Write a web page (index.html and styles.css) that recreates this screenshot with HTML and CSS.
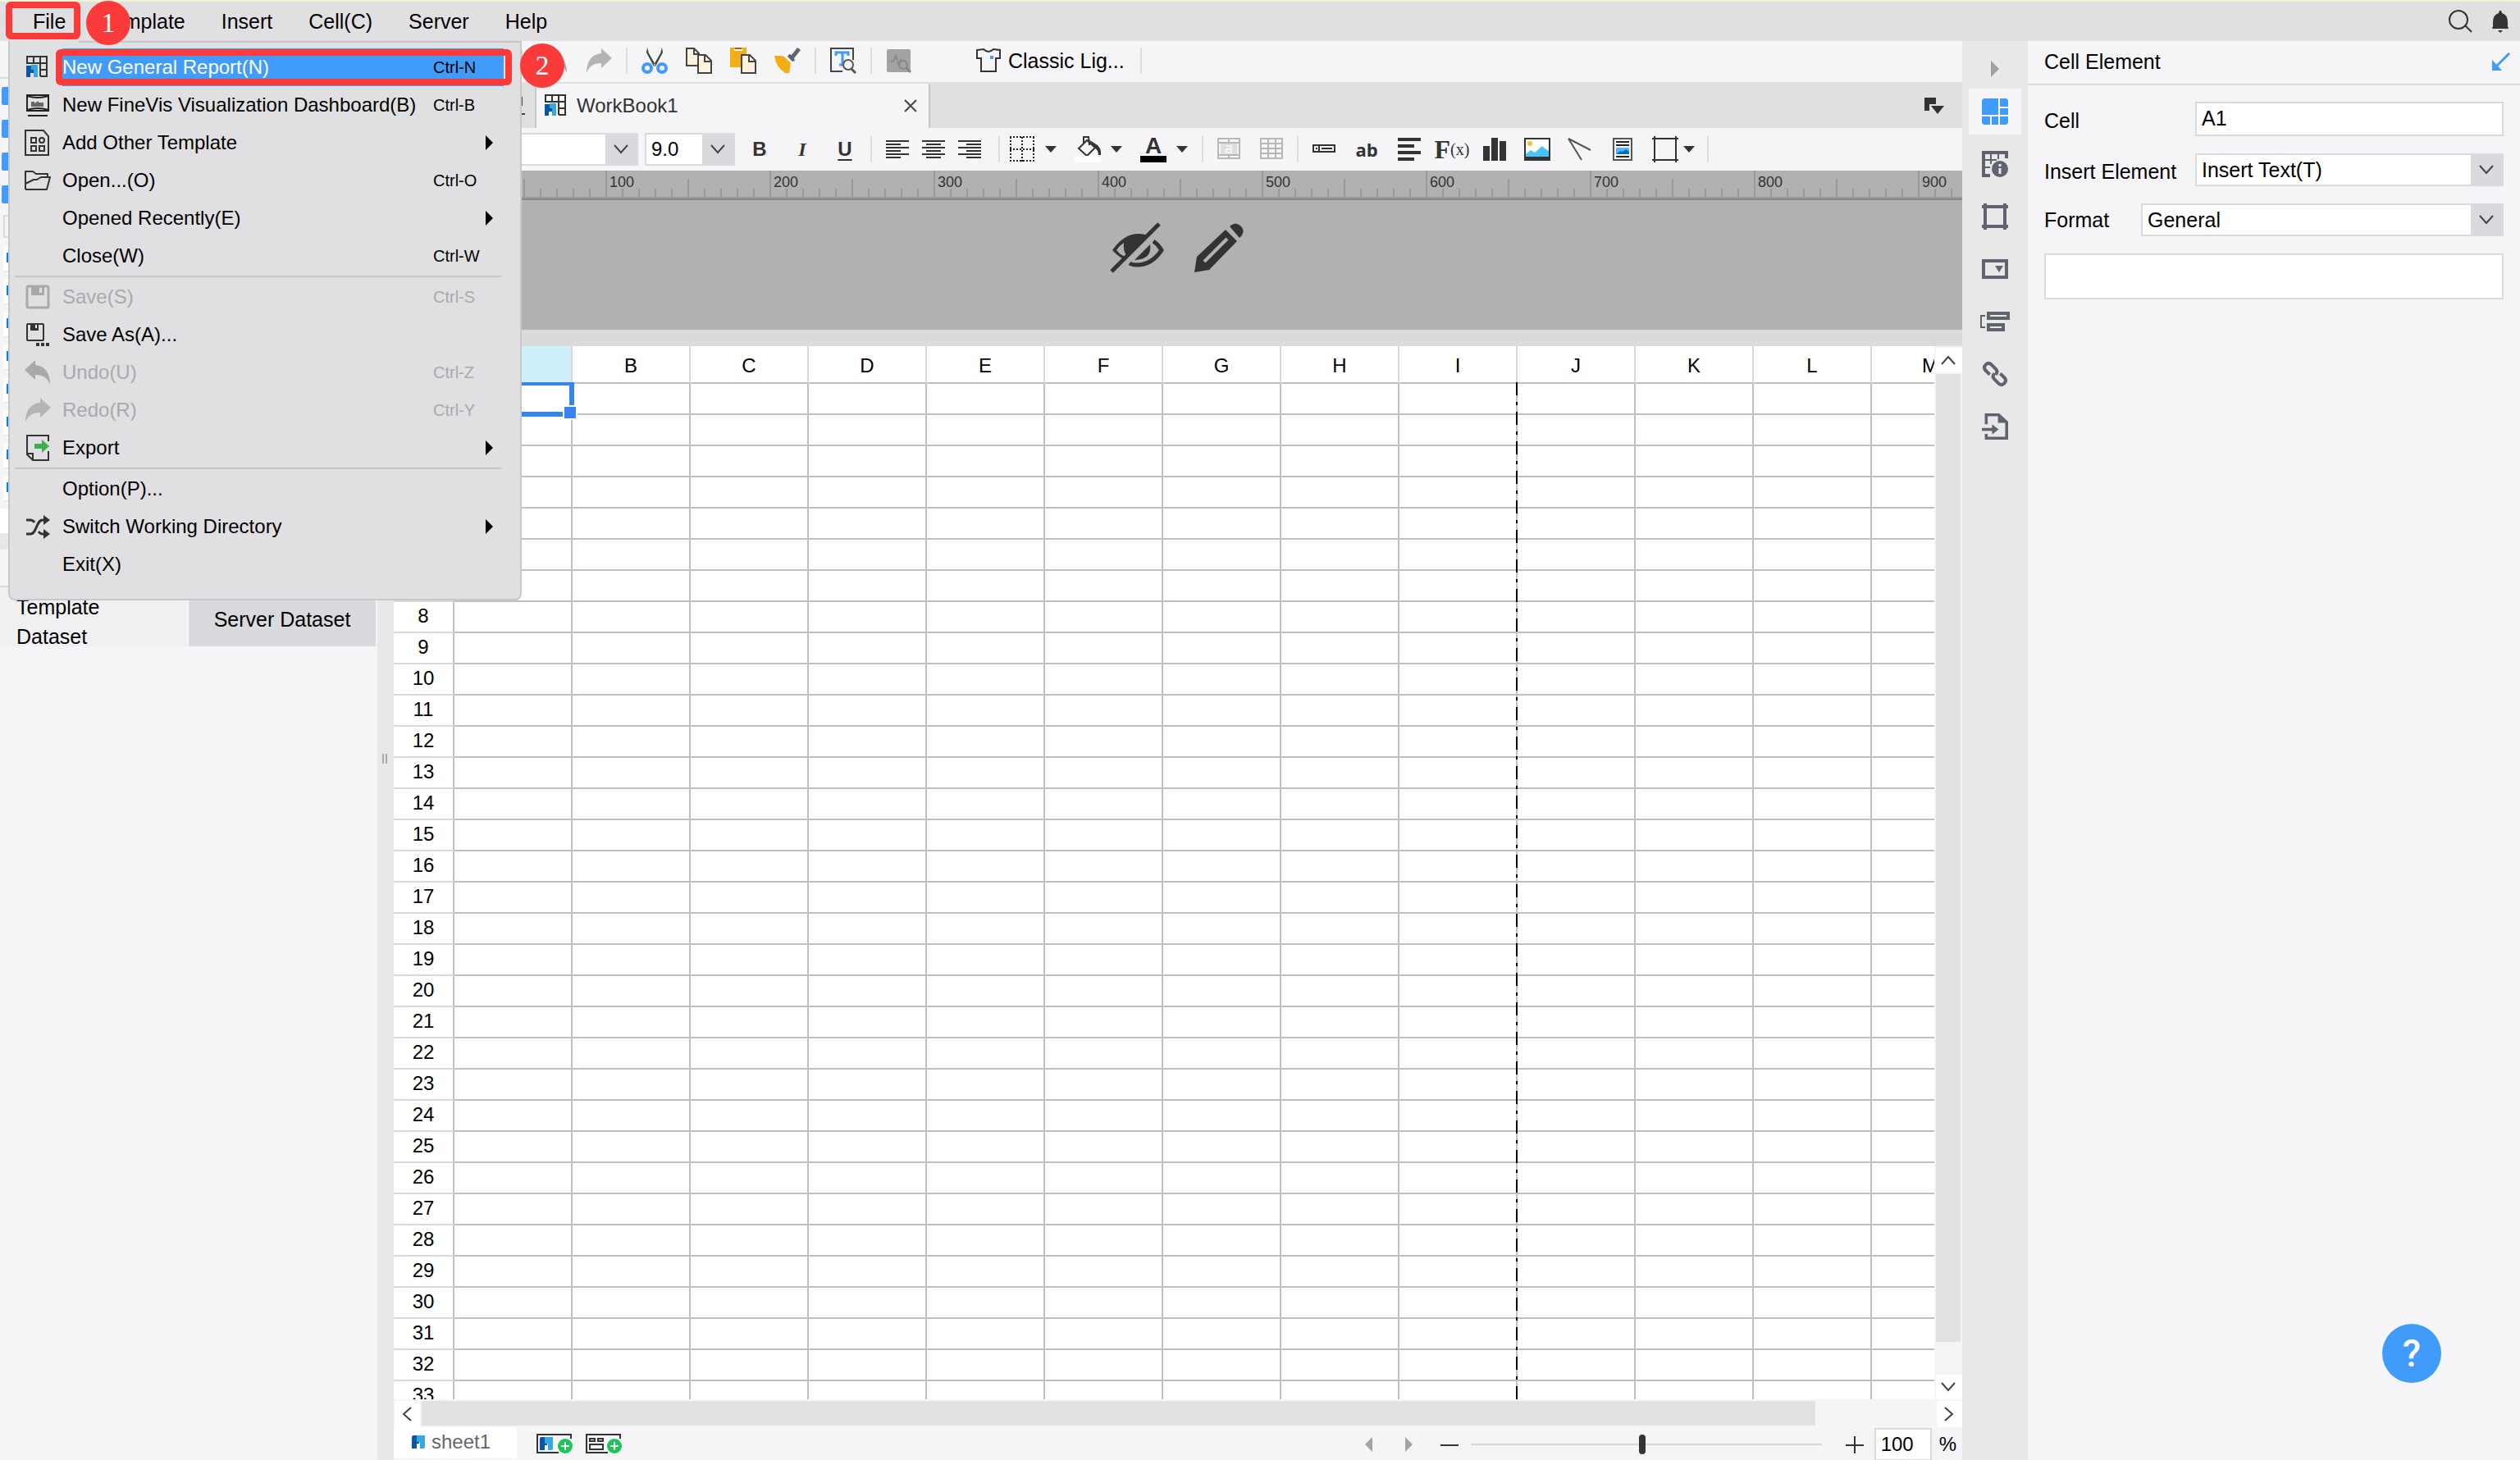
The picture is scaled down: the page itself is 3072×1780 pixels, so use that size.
FILE: index.html
```html
<!DOCTYPE html>
<html lang="en">
<head>
<meta charset="utf-8">
<title>WorkBook1</title>
<link rel="stylesheet" href="styles.css">
</head>
<body>
<svg class="defs" aria-hidden="true">
  <symbol id="i-report" viewBox="0 0 32 32">
    <path d="M3 12V3h24v24h-8M3 11h24M11 3v8M19 3v24M19 19h8" fill="none" stroke="#333" stroke-width="2"/>
    <path d="M2 14h6v5h3v4H7v5H2z" fill="#0a56a3"/><path d="M8 13h8v15h-5v-9H8z" fill="#35a8e0"/>
  </symbol>
  <symbol id="i-dash" viewBox="0 0 32 32">
    <path d="M3 4h26v19H3zM3 5q13 4 26 0M3 22q13-4 26 0M4 29h24" fill="none" stroke="#222" stroke-width="2"/>
    <path d="M8 18v-6h4v2l5-3v2h6v5z" fill="#666"/>
  </symbol>
  <symbol id="i-addt" viewBox="0 0 32 32">
    <path d="M1 1h22l6 7v23H1zM8 10h6v6H8zM8 20h6v6H8zM18 20h6v6h-6z" fill="none" stroke="#333" stroke-width="2"/>
    <circle cx="21" cy="13" r="3" fill="none" stroke="#333" stroke-width="2"/>
  </symbol>
  <symbol id="i-open" viewBox="0 0 32 32">
    <path d="M1 27V5h9l4 3h14v4M1 20l10-5h4l5-3h11l-4 15H1" fill="none" stroke="#333" stroke-width="2" stroke-linejoin="round"/>
  </symbol>
  <symbol id="i-save" viewBox="0 0 32 32">
    <rect x="3" y="3" width="26" height="26" rx="2" fill="none" stroke="#a9a9ab" stroke-width="3"/>
    <path d="M8 3h16v11H8z" fill="#a9a9ab"/><path d="M18 5h3v6h-3z" fill="#e0e0e2"/>
  </symbol>
  <symbol id="i-saveas" viewBox="0 0 32 32">
    <rect x="3" y="3" width="20" height="20" rx="1" fill="none" stroke="#333" stroke-width="2"/>
    <path d="M7 3h10v8H7z" fill="#333"/><path d="M13 4h2v4h-2z" fill="#eee"/>
    <path d="M14 26h4v4h-4zM20 26h4v4h-4zM26 26h4v4h-4z" fill="#333"/>
  </symbol>
  <symbol id="i-undo" viewBox="0 0 32 32"><path d="M0 13L13 1v6c12 1 18 10 18 24-3-8-8-12-18-12v6z" fill="#a9a9ab"/></symbol>
  <symbol id="i-redo" viewBox="0 0 32 32"><path d="M32 13L19 1v6C7 8 1 17 1 31c3-8 8-12 18-12v6z" fill="#b4b4b6"/></symbol>
  <symbol id="i-export" viewBox="0 0 32 32">
    <path d="M29 8V1H3v23l7 7h19V20M3 23h7v8" fill="none" stroke="#333" stroke-width="2"/>
    <path d="M12 11h9V6l9 8-9 8v-5h-9z" fill="#3fae4f"/>
  </symbol>
  <symbol id="i-switch" viewBox="0 0 32 32">
    <path d="M2 8h5q3 0 5 3M2 25h5c8 0 7-17 15-17h3M17 22q2 3 5 3h3" fill="none" stroke="#333" stroke-width="3"/>
    <path d="M23 2l8 6-8 6zM23 19l8 6-8 6z" fill="#333"/>
  </symbol>
  <symbol id="i-cut" viewBox="0 0 32 32">
    <path d="M7 0l2 7 8 14-2 2L6 6zM25 0l-2 7-8 14 2 2 9-17z" fill="#444"/>
    <circle cx="7" cy="25" r="5" fill="none" stroke="#419bf9" stroke-width="4"/><circle cx="25" cy="25" r="5" fill="none" stroke="#419bf9" stroke-width="4"/>
  </symbol>
  <symbol id="i-copy" viewBox="0 0 32 32">
    <path d="M1 1h9l6 6v15H1z" fill="#fff3dc" stroke="#444" stroke-width="2"/><path d="M10 1v7h6" fill="none" stroke="#444" stroke-width="2"/>
    <path d="M15 9h9l7 7v15H15z" fill="#fff3dc" stroke="#444" stroke-width="2"/><path d="M23 9v8h8" fill="none" stroke="#444" stroke-width="2"/>
  </symbol>
  <symbol id="i-paste" viewBox="0 0 32 32">
    <path d="M0 0h20v24H0z" fill="#f2ad17"/><path d="M6 0h8v3H6z" fill="#b7561c"/><path d="M5 3h10" stroke="#fff" stroke-width="2"/>
    <path d="M14 9h10l7 7v15H14z" fill="#fff3dc" stroke="#444" stroke-width="2"/><path d="M23 9v8h8" fill="none" stroke="#444" stroke-width="2"/>
  </symbol>
  <symbol id="i-brush" viewBox="0 0 32 32">
    <path d="M0 10h8l4 1 8 8-2 12h-5Q2 24 0 10z" fill="#f2ad17"/><path d="M28 0l4 3-8 10 1 3-3 1-6-6 2-3 3 1z" fill="#5f636e"/>
  </symbol>
  <symbol id="i-tsearch" viewBox="0 0 32 32">
    <path d="M15 29H1V1h27v14" fill="none" stroke="#444" stroke-width="2"/>
    <path d="M7 10V6h15v4M15 6v15M11 21h6" fill="none" stroke="#419bf9" stroke-width="3"/>
    <circle cx="22" cy="21" r="6" fill="#f5f5f7" stroke="#555" stroke-width="2"/><path d="M26 26l5 5" stroke="#555" stroke-width="3"/>
  </symbol>
  <symbol id="i-psearch" viewBox="0 0 32 32">
    <rect x="1" y="2" width="29" height="28" rx="2" fill="#a3a3a5"/>
    <path d="M5 17h4l3-7 3 10 4-6" fill="none" stroke="#8b8b8d" stroke-width="2"/>
    <circle cx="21" cy="21" r="5" fill="none" stroke="#858587" stroke-width="2"/><path d="M25 25l5 5" stroke="#858587" stroke-width="3"/>
  </symbol>
  <symbol id="i-shirt" viewBox="0 0 32 32">
    <path d="M2 3l8-1q6 6 12 0l8 1v10h-5v16H7V13H2z" fill="none" stroke="#333" stroke-width="2"/><path d="M18 10h4v4h-4z" fill="#419bf9"/>
  </symbol>
  <symbol id="i-left" viewBox="0 0 32 32"><path d="M2 6h28M2 10h18M2 14h28M2 18h18M2 22h28M2 26h18" stroke="#333" stroke-width="2"/></symbol>
  <symbol id="i-center" viewBox="0 0 32 32"><path d="M2 6h28M7 10h18M2 14h28M7 18h18M2 22h28M7 26h18" stroke="#333" stroke-width="2"/></symbol>
  <symbol id="i-right" viewBox="0 0 32 32"><path d="M2 6h28M12 10h18M2 14h28M12 18h18M2 22h28M12 26h18" stroke="#333" stroke-width="2"/></symbol>
  <symbol id="i-border" viewBox="0 0 32 32"><path d="M1 1h30M1 30h30M2 1v30M30 1v30M16 1v30M1 16h30" fill="none" stroke="#222" stroke-width="2" stroke-dasharray="2 2"/></symbol>
  <symbol id="i-fill" viewBox="0 0 32 32">
    <path d="M11 9V1h6l1 10M15 5L5 15l10 9 10-10z" fill="none" stroke="#333" stroke-width="2"/><path d="M17 4l11 7q5 5 4 12h-3q0-6-5-9z" fill="#333"/>
    <path d="M0 24h32v8H0z" fill="#fff"/>
  </symbol>
  <symbol id="i-merge" viewBox="0 0 32 32">
    <path d="M3 3h26v24H3zM3 8h26M16 3v5M3 23h26M16 23v4" fill="none" stroke="#b8b8ba" stroke-width="2"/>
    <path d="M6 9h20v13H6z" fill="#dedee0"/><path d="M13 12h6v8h-6v-4h5" fill="none" stroke="#f5f5f7" stroke-width="2"/>
  </symbol>
  <symbol id="i-grid" viewBox="0 0 32 32"><path d="M3 3h26v24H3zM3 9h26M3 15h26M3 21h26M12 3v24M21 3v24" fill="none" stroke="#b8b8ba" stroke-width="2"/></symbol>
  <symbol id="i-field" viewBox="0 0 32 32"><path d="M3 11h26v8H3zM10 11v8M13 15h13M6 15h2" fill="none" stroke="#333" stroke-width="2"/></symbol>
  <symbol id="i-lines" viewBox="0 0 32 32"><path d="M2 4h28M2 12h20M2 20h28M2 28h20" stroke="#333" stroke-width="4"/></symbol>
  <symbol id="i-chart" viewBox="0 0 32 32"><path d="M2 12h8v18H2zM12 2h8v28h-8zM22 6h8v24h-8z" fill="#333"/></symbol>
  <symbol id="i-image" viewBox="0 0 32 32">
    <path d="M1 3h30v26H1z" fill="#fff" stroke="#333" stroke-width="2"/><circle cx="7" cy="9" r="3" fill="#fcb940"/>
    <path d="M2 25v-3l6-5 5 3 9-8 3 3 5 3v7z" fill="#44c4fb"/><path d="M0 25h32v5H0z" fill="#333"/>
  </symbol>
  <symbol id="i-slash" viewBox="0 0 32 32"><path d="M2 3l27 14M2 3l16 26" stroke="#555" stroke-width="2"/></symbol>
  <symbol id="i-doc" viewBox="0 0 32 32">
    <path d="M5 3h22v26H5z" fill="#fff" stroke="#555" stroke-width="2"/><path d="M8 7h16M8 11h16M8 25h16" stroke="#222" stroke-width="2"/>
    <path d="M8 14h16v8H8z" fill="#5db4fb"/><path d="M8 22l5-4 3 1 4-3 4 3v3z" fill="#066fc4"/>
  </symbol>
  <symbol id="i-frame" viewBox="0 0 32 32"><path d="M0 3h32M0 29h32M3 0v32M29 0v32" stroke="#333" stroke-width="2"/></symbol>
  <symbol id="i-caret" viewBox="0 0 14 8"><path d="M0 0h14L7 8z" fill="#333"/></symbol>
  <symbol id="i-chev" viewBox="0 0 18 12"><path d="M1 1l8 9 8-9" fill="none" stroke="#444" stroke-width="2"/></symbol>
  <symbol id="i-tri" viewBox="0 0 10 18"><path d="M0 0l9 9-9 9z"/></symbol>
  <symbol id="i-sheet" viewBox="0 0 16 16"><path d="M0 2q0-2 2-2h4v8h3v2H6v6H0z" fill="#0a56a3"/><path d="M6 0h10v14q0 2-2 2h-4V8H6z" fill="#35a8e0"/></symbol>
</svg>

<div class="app">
  <header class="menubar">
    <nav class="menus">
      <button class="menu-btn">File</button><button class="menu-btn">Template</button><button class="menu-btn">Insert</button><button class="menu-btn">Cell(C)</button><button class="menu-btn">Server</button><button class="menu-btn">Help</button>
    </nav>
    <div class="menu-tools">
      <button class="bare" aria-label="Search"><svg width="30" height="28" viewBox="0 0 30 28"><circle cx="12" cy="12" r="11" fill="none" stroke="#333" stroke-width="2"/><path d="M20 19l8 8" stroke="#333" stroke-width="2"/></svg></button>
      <button class="bare" aria-label="Notifications"><svg width="22" height="28" viewBox="0 0 22 28"><path d="M10 1h2l1 3q7 2 7 11v5l1 3H1l1-3v-5Q2 6 9 4zM8 25h6l-3 3z" fill="#333"/></svg></button>
    </div>
  </header>

  <div class="workspace">
    <aside class="side">
      <div class="side-head"></div>
      <div class="side-tools"><i></i><i></i><i></i><i></i></div>
      <div class="side-filter"></div>
      <ul class="side-list"><li></li><li></li><li></li><li></li><li></li><li></li><li></li><li></li></ul>
      <div class="side-foot"></div>
      <div class="side-split"></div>
      <div class="side-sub"></div>
      <div class="side-tabs">
        <button class="side-tab">Template Dataset</button>
        <button class="side-tab side-tab-off">Server Dataset</button>
      </div>
    </aside>
    <div class="splitter"><span></span></div>

    <main class="editor">
      <div class="toolbar">
        <button class="tool" aria-label="New"><svg><use href="#i-report"/></svg></button>
        <button class="tool" aria-label="Open"><svg><use href="#i-open"/></svg></button>
        <button class="tool" aria-label="Save"><svg><use href="#i-save"/></svg></button>
        <button class="tool" aria-label="Undo"><svg><use href="#i-undo"/></svg></button>
        <button class="tool" aria-label="Redo"><svg><use href="#i-redo"/></svg></button>
        <span class="sep"></span>
        <button class="tool" aria-label="Cut"><svg><use href="#i-cut"/></svg></button>
        <button class="tool" aria-label="Copy"><svg><use href="#i-copy"/></svg></button>
        <button class="tool" aria-label="Paste"><svg><use href="#i-paste"/></svg></button>
        <button class="tool" aria-label="Format painter"><svg><use href="#i-brush"/></svg></button>
        <span class="sep"></span>
        <button class="tool" aria-label="Find text"><svg><use href="#i-tsearch"/></svg></button>
        <span class="sep"></span>
        <button class="tool" aria-label="Inspect"><svg><use href="#i-psearch"/></svg></button>
        <button class="theme"><svg><use href="#i-shirt"/></svg>Classic Lig...</button>
        <span class="sep"></span>
      </div>

      <div class="tabs">
        <div class="tab-prev"><svg class="close" viewBox="0 0 16 22"><path d="M1 1h11v10M1 21h15" fill="none" stroke="#444" stroke-width="2"/></svg></div>
        <div class="tab">
          <svg><use href="#i-report"/></svg><span>WorkBook1</span>
          <button class="bare" aria-label="Close tab"><svg class="close" viewBox="0 0 16 16"><path d="M1 1l14 14M15 1L1 15" stroke="#444" stroke-width="2"/></svg></button>
        </div>
        <button class="bare tab-more" aria-label="All tabs"><svg width="24" height="20" viewBox="0 0 24 20"><path d="M0 0h14v8H6v8H0z" fill="#333"/><path d="M8 10h16l-8 10z" fill="#333"/></svg></button>
      </div>

      <div class="format">
        <div class="combo combo-font"><select aria-label="Font"><option></option></select><span class="combo-btn"><svg><use href="#i-chev"/></svg></span></div>
        <div class="combo combo-size"><select aria-label="Font size"><option>9.0</option></select><span class="combo-btn"><svg><use href="#i-chev"/></svg></span></div>
        <button class="fmt"><b>B</b></button>
        <button class="fmt fmt-i"><i>I</i></button>
        <button class="fmt"><u>U</u></button>
        <span class="sep"></span>
        <div class="aligns">
          <button class="fmt" aria-label="Align left"><svg><use href="#i-left"/></svg></button>
          <button class="fmt" aria-label="Align center"><svg><use href="#i-center"/></svg></button>
          <button class="fmt" aria-label="Align right"><svg><use href="#i-right"/></svg></button>
        </div>
        <span class="sep"></span>
        <div class="splits">
          <div class="split"><button class="fmt" aria-label="Borders"><svg><use href="#i-border"/></svg></button><button class="drop" aria-label="Border options"><svg><use href="#i-caret"/></svg></button></div>
          <div class="split"><button class="fmt" aria-label="Fill"><svg><use href="#i-fill"/></svg></button><button class="drop" aria-label="Fill options"><svg><use href="#i-caret"/></svg></button></div>
          <div class="split"><button class="fmt fmt-color">A</button><button class="drop" aria-label="Color options"><svg><use href="#i-caret"/></svg></button></div>
        </div>
        <span class="sep"></span>
        <button class="fmt" aria-label="Merge"><svg><use href="#i-merge"/></svg></button>
        <button class="fmt" aria-label="Unmerge"><svg><use href="#i-grid"/></svg></button>
        <span class="sep"></span>
        <button class="fmt" aria-label="Data column"><svg><use href="#i-field"/></svg></button>
        <button class="fmt fmt-ab">ab</button>
        <button class="fmt" aria-label="Rich text"><svg><use href="#i-lines"/></svg></button>
        <button class="fmt fmt-fx">F<small>(x)</small></button>
        <button class="fmt" aria-label="Chart"><svg><use href="#i-chart"/></svg></button>
        <button class="fmt" aria-label="Image"><svg><use href="#i-image"/></svg></button>
        <button class="fmt" aria-label="Slope line"><svg><use href="#i-slash"/></svg></button>
        <button class="fmt" aria-label="Sub report"><svg><use href="#i-doc"/></svg></button>
        <div class="split split-last"><button class="fmt" aria-label="Float element"><svg><use href="#i-frame"/></svg></button><button class="drop" aria-label="Float options"><svg><use href="#i-caret"/></svg></button></div>
        <span class="sep"></span>
      </div>

      <div class="ruler"><div class="marks"><span>0</span><span>100</span><span>200</span><span>300</span><span>400</span><span>500</span><span>600</span><span>700</span><span>800</span><span>900</span></div></div>

      <div class="pane">
        <button class="bare" aria-label="Hide parameter pane"><svg width="64" height="60" viewBox="0 0 64 60">
          <path d="M2 33q14-20 32-20 6 0 11 2L16 44Q8 40 2 33z" fill="#333"/>
          <path d="M7 33q4-6 9-9-1 10 3 15l-2 2q-6-3-10-8z" fill="#b1b1b1"/>
          <path d="M52 22q6 4 10 11-12 18-30 18-6 0-9-2" fill="none" stroke="#333" stroke-width="5"/>
          <path d="M48 26q3 18-19 19z" fill="#333"/><path d="M1 59L59 1" stroke="#333" stroke-width="5"/>
        </svg></button>
        <button class="bare" aria-label="Edit parameter pane"><svg width="60" height="60" viewBox="0 0 60 60">
          <path d="M0 60l3-19L38 8l14 14-34 35zM43 4q7-7 14 0 6 7-2 14z" fill="#333"/><path d="M12 47L40 19" stroke="#b1b1b1" stroke-width="4"/>
        </svg></button>
      </div>
      <div class="pane-edge"></div>

      <div class="sheet">
        <div class="viewport">
          <table class="cells"><thead><tr><th class="corner"></th></tr></thead><tbody></tbody></table>
          <div class="page-break"></div>
        </div>
        <div class="vscroll">
          <button class="bare" aria-label="Scroll up"><svg class="up"><use href="#i-chev"/></svg></button>
          <div class="vtrack"><div class="vthumb"></div></div>
          <button class="bare" aria-label="Scroll down"><svg><use href="#i-chev"/></svg></button>
        </div>
      </div>
      <div class="hscroll">
        <button class="bare" aria-label="Scroll left"><svg class="lt"><use href="#i-chev"/></svg></button>
        <div class="htrack"><div class="hthumb"></div></div>
        <button class="bare" aria-label="Scroll right"><svg class="rt"><use href="#i-chev"/></svg></button>
      </div>

      <footer class="status">
        <button class="sheet-tab"><svg><use href="#i-sheet"/></svg>sheet1</button>
        <button class="bare add" aria-label="Add sheet"><svg width="44" height="24" viewBox="0 0 44 24"><path d="M42 6V1H1v22h26" fill="none" stroke="#333" stroke-width="2"/><use href="#i-sheet" x="4" y="4" width="16" height="16"/><circle cx="35" cy="15" r="9" fill="#1cc558"/><path d="M35 10v10M30 15h10" stroke="#fff" stroke-width="2"/></svg></button>
        <button class="bare add" aria-label="Add form sheet"><svg width="44" height="24" viewBox="0 0 44 24"><path d="M42 6V1H1v22h26M5 6h6v3H5zM15 6h6v3h-6zM5 13h16v6H5z" fill="none" stroke="#333" stroke-width="2"/><circle cx="35" cy="15" r="9" fill="#1cc558"/><path d="M35 10v10M30 15h10" stroke="#fff" stroke-width="2"/></svg></button>
        <div class="zoom">
          <button class="bare" aria-label="Previous sheet"><svg class="nav prev"><use href="#i-tri"/></svg></button>
          <button class="bare" aria-label="Next sheet"><svg class="nav"><use href="#i-tri"/></svg></button>
          <button class="bare minus" aria-label="Zoom out"><svg width="22" height="22" viewBox="0 0 22 22"><path d="M0 12h22" stroke="#333" stroke-width="2"/></svg></button>
          <input class="slider" type="range" min="0" max="100" value="49" aria-label="Zoom">
          <button class="bare plus" aria-label="Zoom in"><svg width="22" height="22" viewBox="0 0 22 22"><path d="M0 12h22M11 1v21" stroke="#333" stroke-width="2"/></svg></button>
          <input class="percent" id="pct" value="100"><label for="pct">%</label>
        </div>
      </footer>
    </main>

    <nav class="dock">
      <button class="dock-fold" aria-label="Collapse"><svg width="10" height="20" viewBox="0 0 10 20"><path d="M0 0l10 10L0 20z" fill="#a0a0a2"/></svg></button>
      <button class="dock-btn dock-on" aria-label="Cell element"><svg viewBox="0 0 32 32"><path d="M2 0h18v20H0V2zM22 0h8l2 2v8H22zM22 12h10v8H22zM0 22h10v10H2l-2-2zM12 22h8v10h-8zM22 22h10v8l-2 2h-8z" fill="#419bf9"/></svg></button>
      <button class="dock-btn" aria-label="Cell attributes"><svg viewBox="0 0 32 32"><path d="M10 30H2V2h28v7" fill="none" stroke="#5f636e" stroke-width="4"/><path d="M11 4v12M20 4v6M4 11h14M4 20h6" stroke="#5f636e" stroke-width="2"/><circle cx="22" cy="22" r="10" fill="#5f636e"/><path d="M22 16v3M22 21v7" stroke="#e8e8e8" stroke-width="3"/></svg></button>
      <button class="dock-btn" aria-label="Float element"><svg viewBox="0 0 32 32"><path d="M0 4h32M0 28h32M4 0v32M28 0v32" stroke="#5f636e" stroke-width="4"/></svg></button>
      <button class="dock-btn" aria-label="Widget settings"><svg viewBox="0 0 32 32"><rect x="2" y="6" width="28" height="20" fill="none" stroke="#5f636e" stroke-width="4"/><path d="M16 12h10l-5 8z" fill="#5f636e"/></svg></button>
      <button class="dock-btn" aria-label="Condition attributes"><svg width="36" viewBox="0 0 36 32"><path d="M6 9H1v14h5" fill="none" stroke="#5f636e" stroke-width="2"/><path d="M10 6h24v6H10zM10 20h18v6H10z" fill="none" stroke="#5f636e" stroke-width="4"/></svg></button>
      <button class="dock-btn" aria-label="Hyperlink"><svg viewBox="0 0 32 32"><g fill="none" stroke="#5f636e" stroke-width="4" transform="rotate(45 16 16)"><path d="M12 21H5q-5 0-5-5t5-5h7q5 0 5 5M20 11h7q5 0 5 5t-5 5h-7q-5 0-5-5"/></g></svg></button>
      <button class="dock-btn" aria-label="Import"><svg viewBox="0 0 36 36"><path d="M6 15V2h17l11 10v22H6v-6" fill="none" stroke="#5f636e" stroke-width="4"/><path d="M22 0v13h13zM14 15l9 7-9 7z" fill="#5f636e"/><path d="M0 22h18" stroke="#5f636e" stroke-width="4"/></svg></button>
    </nav>

    <aside class="props">
      <div class="props-head"><h2>Cell Element</h2><button class="bare" aria-label="Dock panel"><svg width="22" height="22" viewBox="0 0 22 22"><path d="M21 1L5 17" stroke="#419bf9" stroke-width="3"/><path d="M0 9v13h12z" fill="#419bf9"/></svg></button></div>
      <form class="props-form">
        <div class="row row-cell"><label for="cell">Cell</label><input id="cell" class="box" value="A1"></div>
        <div class="row row-insert"><label for="ins">Insert Element</label><div class="combo"><select id="ins"><option>Insert Text(T)</option></select><span class="combo-btn"><svg><use href="#i-chev"/></svg></span></div></div>
        <div class="row row-format"><label for="fmt">Format</label><div class="combo"><select id="fmt"><option>General</option></select><span class="combo-btn"><svg><use href="#i-chev"/></svg></span></div></div>
        <input class="box box-tall" aria-label="Value">
      </form>
    </aside>
  </div>
</div>

<div class="popup">
  <button class="item item-on"><svg><use href="#i-report"/></svg><span>New General Report(N)</span><kbd>Ctrl-N</kbd></button>
  <button class="item"><svg><use href="#i-dash"/></svg><span>New FineVis Visualization Dashboard(B)</span><kbd>Ctrl-B</kbd></button>
  <button class="item"><svg><use href="#i-addt"/></svg><span>Add Other Template</span><svg class="more"><use href="#i-tri"/></svg></button>
  <button class="item"><svg><use href="#i-open"/></svg><span>Open...(O)</span><kbd>Ctrl-O</kbd></button>
  <button class="item"><svg></svg><span>Opened Recently(E)</span><svg class="more"><use href="#i-tri"/></svg></button>
  <button class="item"><svg></svg><span>Close(W)</span><kbd>Ctrl-W</kbd></button>
  <hr>
  <button class="item" disabled><svg><use href="#i-save"/></svg><span>Save(S)</span><kbd>Ctrl-S</kbd></button>
  <button class="item"><svg><use href="#i-saveas"/></svg><span>Save As(A)...</span></button>
  <button class="item" disabled><svg><use href="#i-undo"/></svg><span>Undo(U)</span><kbd>Ctrl-Z</kbd></button>
  <button class="item" disabled><svg><use href="#i-redo"/></svg><span>Redo(R)</span><kbd>Ctrl-Y</kbd></button>
  <button class="item"><svg><use href="#i-export"/></svg><span>Export</span><svg class="more"><use href="#i-tri"/></svg></button>
  <hr>
  <button class="item"><svg></svg><span>Option(P)...</span></button>
  <button class="item"><svg><use href="#i-switch"/></svg><span>Switch Working Directory</span><svg class="more"><use href="#i-tri"/></svg></button>
  <button class="item"><svg></svg><span>Exit(X)</span></button>
</div>

<div class="mark mark-file"></div>
<div class="mark mark-report"></div>
<div class="step step-1">1</div>
<div class="step step-2">2</div>
<button class="help">?</button>
<script src="grid.js"></script>
</body>
</html>
```

FILE: styles.css
```css
* { box-sizing: border-box; }
html, body { height: 100%; margin: 0; }
body {
  position: relative;
  overflow: hidden;
  background: #f5f5f7;
  color: #000;
  font: 25px/36px "Liberation Sans", Arial, sans-serif;
}
button, input, select { font: inherit; color: inherit; border: 0; margin: 0; padding: 0; background: none; border-radius: 0; }
input, select { outline: 0; min-width: 0; }
svg { display: block; width: 32px; height: 32px; flex: none; overflow: visible; }
.defs { position: absolute; width: 0; height: 0; }
.bare { display: flex; align-items: center; justify-content: center; flex: none; }
.bare svg[width] { width: auto; height: auto; }

.app { display: flex; flex-direction: column; height: 100%; }

/* menu bar */
.menubar {
  display: flex; justify-content: space-between; align-items: center;
  height: 50px; flex: none; padding: 0 13px 0 18px;
  border-top: 2px solid #f1f5d5; background: #e0e0e2;
}
.menus { display: flex; }
.menu-btn { padding: 0 22px; }
.menu-tools { display: flex; gap: 22px; }

.workspace { display: flex; flex: 1; min-height: 0; }

/* left panel */
.side { width: 460px; flex: none; display: flex; flex-direction: column; }
.side-head { height: 46px; border-bottom: 2px solid #d9dade; }
.side-tools { display: flex; flex-direction: column; gap: 18px; padding: 10px 0 14px 2px; }
.side-tools i { width: 44px; height: 22px; border-radius: 2px; background: #419bf9; }
.side-filter { height: 28px; margin-left: 4px; border: 2px solid #d9dade; border-right: 0; }
.side-list { list-style: none; margin: 10px 0 0 4px; padding: 0; }
.side-list li { height: 32px; margin-bottom: 8px; padding: 8px 4px; background: #fff; border-bottom: 2px solid #ececee; }
.side-list li::before { content: ""; display: block; width: 12px; height: 12px; background: #0b80d8; }
.side-foot { height: 30px; background: #fff; }
.side-split { height: 20px; background: #e8e8e8; }
.side-sub { height: 46px; border-bottom: 2px solid #d9dade; }
.side-tabs { display: grid; grid-template-columns: 1fr 1fr; gap: 2px; margin-right: 2px; height: 72px; }
.side-tab { height: 72px; padding: 6px 20px 0; text-align: left; background: #f0f0f2; }
.side-tab-off { text-align: center; background: #d9dade; }
.splitter { width: 20px; flex: none; display: flex; align-items: center; padding: 20px 0 0 6px; background: #e8e8e8; }
.splitter span { width: 6px; height: 12px; border: 2px solid #aaa; border-width: 0 2px; }

.editor { flex: 1; min-width: 0; display: flex; flex-direction: column; }
.sep { width: 2px; height: 32px; flex: none; margin: 0 6px; background: #dcdcde; }

/* main toolbar */
.toolbar { display: flex; align-items: center; height: 52px; flex: none; padding: 0 0 2px 7px; border-bottom: 2px solid #e0e0e2; }
.tool { display: flex; justify-content: center; width: 54px; flex: none; }
.theme { display: flex; align-items: center; gap: 8px; margin: 0 13px 0 66px; }

/* workbook tabs */
.tabs { display: flex; height: 54px; flex: none; background: #e0e0e2; }
.tab-prev { display: flex; align-items: center; justify-content: flex-end; width: 174px; padding-right: 12px; border-right: 2px solid #c8c8ca; }
.tab { display: flex; align-items: center; width: 480px; padding: 0 14px 0 8px; background: #f5f5f7; border-right: 2px solid #c8c8ca; font-size: 24px; color: #333; }
.tab span { flex: 1; padding-left: 9px; }
.close { width: 16px; height: 16px; }
.tab-prev .close { height: 22px; }
.tab-more { margin-left: auto; padding-right: 22px; }

/* format bar */
.format { display: flex; align-items: center; height: 52px; flex: none; padding-left: 8px; }
.format .sep { margin: 0 5px; }
.fmt { display: flex; align-items: center; justify-content: center; width: 52px; height: 40px; flex: none; font-size: 24px; color: #333; }
.fmt-i { font-family: "Liberation Serif", serif; font-weight: bold; }
.fmt u { font-weight: bold; text-underline-offset: 4px; }
.fmt-ab { font: bold 22px/36px "Open Sans", sans-serif; }
.fmt-fx { font: bold 32px/36px "Liberation Serif", serif; }
.fmt-fx small { font: 20px/36px "Liberation Serif", serif; }
.aligns { display: flex; margin: 0 8px 0 4px; }
.aligns .fmt { width: 44px; }
.splits { display: flex; gap: 10px; padding-right: 6px; }
.split { display: flex; align-items: center; }
.split .fmt { width: 44px; }
.split .fmt-color { width: 32px; height: 32px; margin: 4px 6px; border-bottom: 8px solid #000; font-weight: bold; font-size: 28px; }
.drop { display: flex; justify-content: center; width: 26px; }
.drop svg { width: 14px; height: 8px; }
.split-last { padding: 0 10px 0 4px; }
.split-last .drop { width: 14px; }

.combo { display: grid; grid-template-columns: 1fr 38px; height: 40px; border: 2px solid #d9dade; background: #fff; }
.combo select { grid-area: 1 / 1 / 2 / 3; appearance: none; width: 100%; height: 36px; padding-left: 6px; }
.combo-btn { grid-area: 1 / 2; display: flex; align-items: center; justify-content: center; background: #d9dade; pointer-events: none; }
.combo-btn svg { width: 18px; height: 12px; }
.combo-font { width: 290px; }
.combo-size { width: 110px; margin: 0 4px 0 8px; font-size: 24px; }

/* ruler: a tick every 20px, taller at 100 and full height at 200 */
.ruler {
  height: 36px; flex: none; overflow: hidden; padding-left: 58px;
  border-bottom: 2px solid #888; background: #b1b1b1;
}
.marks {
  display: flex; height: 34px;
  border-bottom: 2px solid #999;
  background:
    repeating-linear-gradient(90deg, #999 0 2px, transparent 2px 200px) 0 0 / auto 32px no-repeat,
    repeating-linear-gradient(90deg, #999 0 2px, transparent 2px 100px) 0 10px / auto 22px no-repeat,
    repeating-linear-gradient(90deg, #999 0 2px, transparent 2px 20px) 0 22px / auto 10px no-repeat;
}
.marks span { width: 200px; flex: none; padding-left: 5px; font-size: 18px; line-height: 28px; color: #333; }

.pane { display: flex; justify-content: center; gap: 38px; height: 158px; padding: 28px 2px 0 0; flex: none; background: #b1b1b1; }
.pane .bare { height: 60px; }
.pane-edge { height: 20px; flex: none; background: #dadadc; }

/* spreadsheet */
.sheet { display: flex; flex: 1; min-height: 0; }
.viewport { position: relative; flex: 1; min-width: 0; overflow: hidden; background: #fff; }
.cells { table-layout: fixed; width: 1946px; border-collapse: separate; border-spacing: 0; font-size: 24px; line-height: 28px; }
.cells th, .cells td { width: 144px; height: 38px; padding: 0; font-weight: normal; border: solid #c0c0c0; border-width: 0 2px 2px 0; }
.cells thead th { height: 46px; padding-top: 4px; border-right-color: #d9d9dd; }
.cells .corner { width: 74px; }
.cells tbody th { border-bottom-color: #d9d9dd; padding-bottom: 2px; }
.cells .col-on { background: #cfeffb; }
.cells .active { position: relative; }
.active::before { content: ""; position: absolute; inset: -2px -4px -4px -4px; border: solid #3584f0; border-width: 4px 6px 6px; }
.active::after { content: ""; position: absolute; right: -8px; bottom: -8px; width: 14px; height: 14px; background: #3584f0; border: 2px solid #fff; }
.page-break {
  position: absolute; top: 44px; bottom: 0; left: 1368px; width: 2px;
  background: repeating-linear-gradient(#000 0 16px, transparent 16px 24px, #000 24px 28px, transparent 28px 36px);
}
.vscroll { width: 34px; flex: none; display: flex; flex-direction: column; padding: 2px 0 0 2px; }
.vscroll .bare { height: 30px; padding-right: 2px; background: #fff; }
.vscroll svg, .hscroll svg { width: 18px; height: 12px; }
.up { transform: rotate(180deg); }
.lt { transform: rotate(90deg); }
.rt { transform: rotate(-90deg); }
.vtrack { flex: 1; padding: 2px 2px 40px 0; }
.vthumb { height: 100%; background: #e1e1e1; }
.hscroll { display: flex; height: 34px; flex: none; padding: 2px 0 0 1px; }
.hscroll .bare { width: 31px; padding-right: 2px; background: #fff; }
.htrack { flex: 1; padding: 0 0 2px 2px; }
.hthumb { width: 92%; height: 30px; background: #e1e1e1; }

/* status bar */
.status { display: flex; align-items: center; height: 40px; flex: none; font-size: 24px; }
.sheet-tab { display: flex; align-items: center; gap: 8px; width: 150px; height: 38px; margin: 0 8px 2px 0; padding: 0 0 2px 22px; background: #fff; color: #666; }
.sheet-tab svg { width: 16px; height: 16px; }
.add { width: 60px; padding-left: 16px; }
.zoom { display: flex; align-items: center; margin-left: auto; padding: 2px 7px 0 0; }
.nav { width: 10px; height: 18px; margin-right: 33px; fill: #a3a3a5; }
.prev { transform: scaleX(-1); margin-right: 40px; }
.slider { appearance: none; width: 428px; height: 24px; margin: 0 29px 0 15px; }
.slider::-webkit-slider-runnable-track { height: 2px; background: #d6d6d8; }
.slider::-webkit-slider-thumb { appearance: none; width: 8px; height: 24px; margin-top: -11px; border-radius: 4px; background: #333; }
.percent { width: 70px; height: 40px; margin: 0 9px 0 13px; padding-left: 6px; background: #fff; border: 2px solid #d9dade; }

/* right dock */
.dock { width: 80px; flex: none; display: flex; flex-direction: column; align-items: center; gap: 8px; background: #e8e8e8; }
.dock-fold { display: flex; justify-content: center; align-items: center; height: 50px; padding-top: 18px; }
.dock-fold svg { width: 10px; height: 20px; }
.dock-btn { display: flex; align-items: center; justify-content: center; width: 64px; height: 56px; }
.dock-btn svg[width] { width: 36px; }
.dock-on { background: #f5f5f7; }

/* properties */
.props { width: 600px; flex: none; }
.props-head { display: flex; justify-content: space-between; align-items: center; height: 54px; padding: 0 12px 2px 20px; border-bottom: 2px solid #d9dade; }
.props-head h2 { margin: 0; font-size: 25px; font-weight: normal; }
.props-form { display: flex; flex-direction: column; gap: 21px; padding: 20px; }
.row { display: grid; grid-template-columns: 184px 1fr; align-items: center; }
.row label { padding-top: 4px; }
.row-format { grid-template-columns: 118px 1fr; }
.row-format label { padding-top: 0; }
.box { height: 42px; padding: 0 6px 2px; border: 2px solid #d9dade; background: #fff; }
.box-tall { height: 56px; }

/* file menu */
.popup {
  position: absolute; left: 10px; top: 50px; width: 626px; height: 682px; padding-top: 9px;
  display: flex; flex-direction: column;
  background: #e0e0e2; border: 2px solid #c8c8ca; border-top: 0; border-radius: 0 0 8px 8px;
  font-size: 24px;
}
.popup::before { content: ""; position: absolute; left: 84px; right: 0; top: 0; height: 2px; background: #c8c8ca; }
.item { display: flex; align-items: center; height: 46px; padding: 0 32px 0 18px; text-align: left; flex: none; }
.item span { flex: 1; margin-left: 14px; white-space: nowrap; }
.item kbd { font: 20px/36px "Liberation Sans", Arial, sans-serif; width: 74px; }
.item .more { width: 10px; height: 18px; }
.item:disabled { color: #a9a9ab; }
.item-on { background: linear-gradient(#419bf9, #419bf9) 64px 0 / 538px 100% no-repeat; }
.item-on span { color: #fff; }
.popup hr { width: 594px; height: 2px; margin: 1px 0 1px 6px; border: 0; background: #c8c8ca; flex: none; }

/* annotations */
.mark { position: absolute; border: 8px solid #fb3a3a; border-radius: 6px; pointer-events: none; }
.mark-file { left: 7px; top: 2px; width: 91px; height: 46px; }
.mark-report { left: 68px; top: 60px; width: 556px; height: 44px; }
.step { position: absolute; width: 54px; height: 54px; border-radius: 50%; background: #fb3a3a; color: #fff; font: 34px/54px "Liberation Serif", serif; text-align: center; }
.step-1 { left: 105px; top: 1px; }
.step-2 { left: 634px; top: 53px; }
.help { position: absolute; right: 96px; bottom: 94px; width: 72px; height: 72px; border-radius: 50%; background: #419bf9; color: #fff; font: 500 46px/72px Roboto, sans-serif; }
```

FILE: grid.js
```js
const cells = document.querySelector(".cells");
const letters = "ABCDEFGHIJKLM";
const rowCount = 33;

for (const letter of letters) {
  const th = document.createElement("th");
  th.textContent = letter;
  if (letter === "A") th.className = "col-on";
  cells.tHead.rows[0].append(th);
}

for (let n = 1; n <= rowCount; n++) {
  const row = cells.tBodies[0].insertRow();
  const th = document.createElement("th");
  th.textContent = n;
  row.append(th);
  for (let c = 0; c < letters.length; c++) {
    const td = row.insertCell();
    if (n === 1 && c === 0) td.className = "active";
  }
}
```
